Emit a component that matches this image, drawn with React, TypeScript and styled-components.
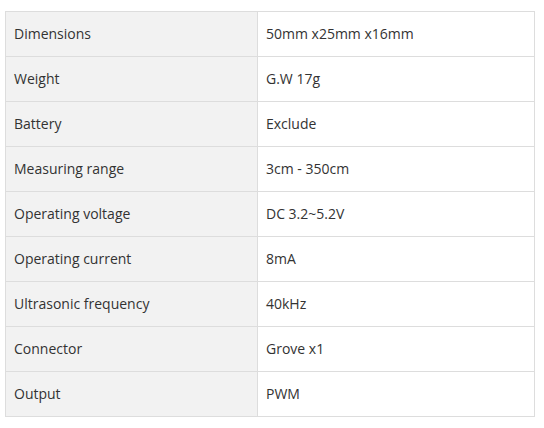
import * as React from "react"
import styled, { createGlobalStyle } from "styled-components"

const GlobalStyle = createGlobalStyle`
  body {
    margin: 0;
    background: #ffffff;
    font-family: "Open Sans", "Liberation Sans", sans-serif;
  }
`

const specs = [
  ["Dimensions", "50mm x25mm x16mm"],
  ["Weight", "G.W 17g"],
  ["Battery", "Exclude"],
  ["Measuring range", "3cm - 350cm"],
  ["Operating voltage", "DC 3.2~5.2V"],
  ["Operating current", "8mA"],
  ["Ultrasonic frequency", "40kHz"],
  ["Connector", "Grove x1"],
  ["Output", "PWM"]
]

export default function App() {
  return (
    <Page>
      <GlobalStyle />
      <SpecTable>
        <tbody>
          {specs.map(([label, value]) => (
            <Row key={label}>
              <Label>{label}</Label>
              <Value>{value}</Value>
            </Row>
          ))}
        </tbody>
      </SpecTable>
    </Page>
  )
}

const Page = styled.div`
  padding: 11px 0 0 5px;
`

const SpecTable = styled.table`
  width: 530px;
  border-collapse: collapse;
  table-layout: fixed;
  font-size: 14px;
  color: #333333;
`

const Row = styled.tr`
  height: 45px;
`

const Cell = styled.td`
  border: 1px solid #dddddd;
  padding: 0 8px 1px;
  vertical-align: middle;
  text-align: left;
`

const Label = styled(Cell)`
  width: 235px;
  background: #f2f2f2;
`

const Value = styled(Cell)`
  background: #ffffff;
`
